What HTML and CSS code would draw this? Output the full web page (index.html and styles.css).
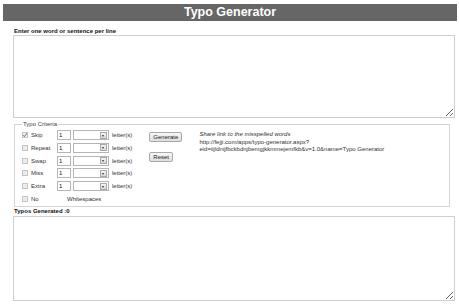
FILE: index.html
```html
<!DOCTYPE html>
<html>
<head>
<meta charset="utf-8">
<link rel="stylesheet" href="styles.css">
</head>
<body>
<div class="title">Typo Generator</div>
<div class="main">
  <div class="lbl">Enter one word or sentence per line</div>
  <textarea class="area area-in"></textarea>
  <fieldset class="criteria">
    <legend>Typo Criteria</legend>
    <div class="crit">
      <div class="rows">
        <div class="row"><span class="cb checked"><svg viewBox="0 0 6 6" width="6" height="6"><path d="M1 3.2 L2.4 4.6 L5 1.2" fill="none" stroke="#5a6f8a" stroke-width="1"/></svg></span><span class="name">Skip</span><span class="num">1</span><span class="sel"><span class="arrow"></span></span><span class="unit">letter(s)</span></div>
        <div class="row"><span class="cb"></span><span class="name">Repeat</span><span class="num">1</span><span class="sel"><span class="arrow"></span></span><span class="unit">letter(s)</span></div>
        <div class="row"><span class="cb"></span><span class="name">Swap</span><span class="num">1</span><span class="sel"><span class="arrow"></span></span><span class="unit">letter(s)</span></div>
        <div class="row"><span class="cb"></span><span class="name">Miss</span><span class="num">1</span><span class="sel"><span class="arrow"></span></span><span class="unit">letter(s)</span></div>
        <div class="row"><span class="cb"></span><span class="name">Extra</span><span class="num">1</span><span class="sel"><span class="arrow"></span></span><span class="unit">letter(s)</span></div>
        <div class="row"><span class="cb"></span><span class="name">No</span><span class="ws">Whitespaces</span></div>
      </div>
      <div class="buttons">
        <button class="btn">Generate</button>
        <button class="btn">Reset</button>
      </div>
      <div class="share">
        <div class="share-title">Share link to the misspelled words</div>
        <div>http://fejji.com/apps/typo-generator.aspx?</div>
        <div>eid=iijldnijfbckbdnjbemgjkkmmejemfkb&amp;v=1.0&amp;name=Typo Generator</div>
      </div>
    </div>
  </fieldset>
  <div class="lbl lbl-out">Typos Generated :0</div>
  <textarea class="area area-out"></textarea>
</div>
</body>
</html>
```
FILE: styles.css
```css
html, body {
  margin: 0;
  padding: 0;
  background: #fff;
  font-family: "Liberation Sans", Arial, sans-serif;
  color: #222;
}
.title {
  margin: 4px 2px 0 3px;
  height: 17px;
  line-height: 17px;
  background: #666666;
  color: #fff;
  font-weight: bold;
  font-size: 12.5px;
  text-align: center;
}
.main {
  padding: 0 4px 0 13px;
}
.lbl {
  font-size: 6px;
  font-weight: bold;
  color: #111;
  margin: 6px 0 0 1px;
  height: 8px;
  line-height: 8px;
}
.area {
  display: block;
  box-sizing: border-box;
  width: 442px;
  margin: 0;
  border: 1px solid #cfcfcf;
  padding: 0;
  background: #fff;
  font-family: inherit;
  font-size: 6px;
}
.area-in {
  height: 83px;
}
.area-out {
  height: 85px;
  margin-top: 0;
}
.criteria {
  margin: 3px 5px 0 1px;
  padding: 0 6px 2px 7px;
  border: 1px solid #d4d4d4;
  font-size: 6px;
  color: #333;
}
.criteria legend {
  padding: 0 1px;
  margin-left: 0;
  font-size: 6px;
  line-height: 6px;
  color: #444;
}
.crit {
  display: flex;
  align-items: flex-start;
}
.rows {
  display: flex;
  flex-direction: column;
  gap: 2.8px;
  padding-top: 3px;
}
.row {
  display: flex;
  align-items: center;
  height: 10px;
}
.cb {
  box-sizing: border-box;
  width: 6px;
  height: 6px;
  border: 1px solid #c4c4c4;
  background: #ececec;
  display: flex;
  align-items: center;
  justify-content: center;
}
.cb svg {
  flex: none;
}
.cb.checked {
  background: #f2f2f2;
}
.name {
  width: 26px;
  margin-left: 3px;
  color: #333;
}
.num {
  box-sizing: border-box;
  width: 14px;
  height: 10px;
  border: 1px solid #b5b5b5;
  line-height: 8px;
  padding-left: 1px;
  color: #111;
}
.sel {
  box-sizing: border-box;
  width: 36px;
  height: 10px;
  margin-left: 2px;
  border: 1px solid #b5b5b5;
  display: flex;
  justify-content: flex-end;
  align-items: center;
  padding-right: 1px;
}
.arrow {
  box-sizing: border-box;
  width: 7px;
  height: 7px;
  border: 1px solid #a8a8a8;
  background: linear-gradient(#f4f4f4, #d8d8d8);
  position: relative;
}
.arrow::after {
  content: "";
  position: absolute;
  left: 1px;
  top: 2px;
  border-left: 1.5px solid transparent;
  border-right: 1.5px solid transparent;
  border-top: 2px solid #333;
}
.unit {
  margin-left: 3px;
  color: #333;
}
.ws {
  margin-left: 10px;
  color: #333;
}
.buttons {
  display: flex;
  flex-direction: column;
  align-items: flex-start;
  gap: 10px;
  margin-left: 17px;
  padding-top: 5px;
}
.btn {
  box-sizing: border-box;
  height: 10px;
  padding: 0 3px;
  margin: 0;
  font-family: inherit;
  font-size: 6px;
  line-height: 8px;
  color: #222;
  border: 1px solid #a9a9a9;
  border-radius: 2px;
  background: linear-gradient(#f7f7f7, #dedede);
}
.share {
  margin-left: 17px;
  padding-top: 4px;
  font-size: 6px;
  line-height: 7.7px;
  color: #333;
}
.share-title {
  font-style: italic;
}
.lbl-out {
  margin-top: 0;
  height: 9px;
  line-height: 9px;
}
```
